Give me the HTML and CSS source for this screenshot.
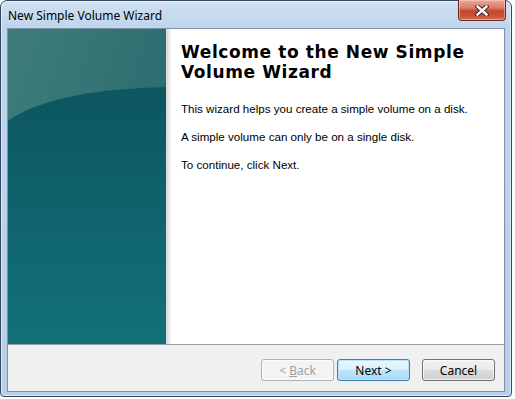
FILE: index.html
```html
<!DOCTYPE html>
<html>
<head>
<meta charset="utf-8">
<title>New Simple Volume Wizard</title>
<link rel="stylesheet" href="styles.css">
</head>
<body>
<div class="window">
  <div class="titlebar">
    <span class="title">New Simple Volume Wizard</span>
    <div class="close">
      <svg width="14" height="11" viewBox="0 0 14 11">
        <path d="M2.5,1.5 L11.5,9.5 M11.5,1.5 L2.5,9.5" stroke="#3b2a28" stroke-width="4.4" stroke-linecap="square" fill="none"/>
        <path d="M2.5,1.5 L11.5,9.5 M11.5,1.5 L2.5,9.5" stroke="#ffffff" stroke-width="2.4" stroke-linecap="square" fill="none"/>
      </svg>
    </div>
  </div>
  <div class="client">
    <div class="content">
      <div class="side">
        <svg width="158" height="315" viewBox="0 0 158 315">
          <defs>
            <linearGradient id="up" x1="0" y1="0" x2="1" y2="0.6">
              <stop offset="0" stop-color="#3e7d7a"/>
              <stop offset="1" stop-color="#296a6e"/>
            </linearGradient>
            <linearGradient id="low" x1="0" y1="0" x2="0" y2="1">
              <stop offset="0" stop-color="#0c5660"/>
              <stop offset="1" stop-color="#137179"/>
            </linearGradient>
          </defs>
          <rect width="158" height="315" fill="url(#up)"/>
          <path d="M0,92 C28,72 78,60 158,58 L158,315 L0,315 Z" fill="url(#low)"/>
        </svg>
      </div>
      <div class="shade"></div>
      <div class="main">
        <h1 class="heading">Welcome to the New Simple Volume Wizard</h1>
        <p class="text">This wizard helps you create a simple volume on a disk.</p>
        <p class="text">A simple volume can only be on a single disk.</p>
        <p class="text">To continue, click Next.</p>
      </div>
    </div>
    <div class="footer">
      <button class="btn disabled">&lt; <u>B</u>ack</button>
      <button class="btn default">Next &gt;</button>
      <button class="btn cancel">Cancel</button>
    </div>
  </div>
</div>
</body>
</html>
```

FILE: styles.css
```css
html, body {
  margin: 0;
  padding: 0;
  background: #ffffff;
}

.window {
  width: 512px;
  height: 397px;
  box-sizing: border-box;
  border: 1px solid #34465e;
  border-radius: 7px 7px 4px 4px;
  background: linear-gradient(to bottom, #cfe0f2 0px, #bfd5ec 28px, #b7cfe9 100%);
  box-shadow: inset 0 0 0 1px rgba(255,255,255,0.55);
  padding: 0 6px 4px 6px;
  display: flex;
  flex-direction: column;
}

.titlebar {
  height: 27px;
  display: flex;
  align-items: flex-start;
  position: relative;
}

.title {
  font-family: "Segoe UI", "Noto Sans", sans-serif;
  font-size: 12px;
  color: #000;
  margin-top: 6px;
  margin-left: 1px;
}

.close {
  margin-left: auto;
  margin-right: -1px;
  margin-top: -1px;
  width: 46px;
  height: 20px;
  border: 1px solid #6a2a22;
  border-top: none;
  border-radius: 0 0 4px 4px;
  background: linear-gradient(to bottom, #e9a99a 0%, #d97a64 40%, #c6462d 55%, #c9523a 80%, #d66e55 100%);
  box-shadow: inset 0 0 0 1px rgba(255,220,210,0.45);
  display: flex;
  align-items: center;
  justify-content: center;
}

.close svg {
  display: block;
}

.client {
  flex: 1;
  border: 1px solid #7d90a8;
  display: flex;
  flex-direction: column;
  background: #ffffff;
}

.content {
  height: 315px;
  display: flex;
  background: #ffffff;
}

.side {
  width: 158px;
  height: 315px;
  flex: none;
}

.side svg {
  display: block;
}

.shade {
  width: 6px;
  flex: none;
  background: linear-gradient(to right, #d6d6d6, #ffffff);
}

.main {
  flex: 1;
  padding: 13px 6px 0 9px;
}

.heading {
  margin: 0 0 20px 0;
  font-family: Verdana, "DejaVu Sans", sans-serif;
  font-weight: bold;
  font-size: 17px;
  line-height: 20px;
  letter-spacing: 0.6px;
  color: #000;
}

.text {
  margin: 0 0 15px 0;
  font-family: "Microsoft Sans Serif", "Liberation Sans", sans-serif;
  font-size: 11.6px;
  line-height: 13px;
  color: #000;
}

.footer {
  flex: 1;
  background: #f0f0f0;
  border-top: 1px solid #a0a0a0;
  display: flex;
  justify-content: flex-end;
  align-items: flex-start;
  padding: 14px 9px 0 0;
}

.btn {
  width: 73px;
  height: 22px;
  box-sizing: border-box;
  margin: 0;
  padding: 0;
  font-family: "Segoe UI", "Noto Sans", sans-serif;
  font-size: 12px;
  color: #000;
  border: 1px solid #707070;
  border-radius: 3px;
  background: linear-gradient(to bottom, #f2f2f2 0%, #ebebeb 50%, #dddddd 51%, #cfcfcf 100%);
  box-shadow: inset 0 0 0 1px rgba(255,255,255,0.7);
}

.btn.disabled {
  color: #a0a0a0;
  border-color: #adb2b5;
  background: #f4f4f4;
}

.btn.default {
  margin-left: 3px;
  border-color: #3c7fb1;
  background: linear-gradient(to bottom, #eaf6fd 0%, #d9f0fc 50%, #bee6fd 51%, #a7d9f5 100%);
  box-shadow: inset 0 0 0 1px #b9e4fb;
}

.btn.cancel {
  margin-left: 12px;
}
```
